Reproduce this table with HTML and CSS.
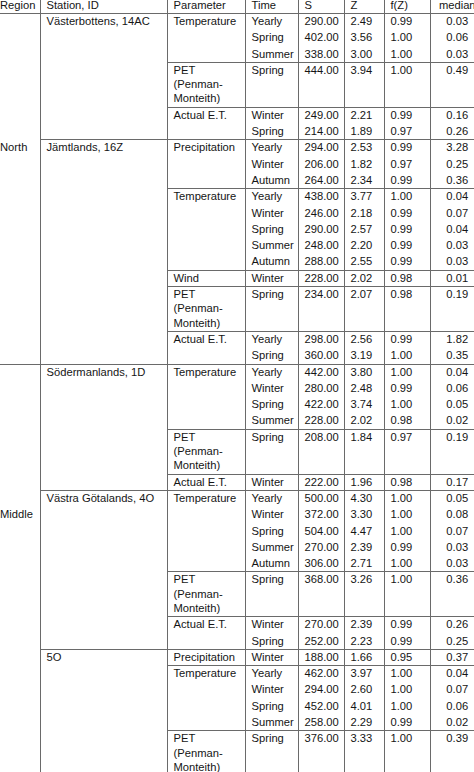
FILE: index.html
```html
<!DOCTYPE html>
<html lang="en">
<head>
<meta charset="utf-8">
<title>Trend test results</title>
<link rel="stylesheet" href="styles.css">
</head>
<body>
<table class="tbl">
  <colgroup>
    <col class="c-region"><col class="c-station"><col class="c-param"><col class="c-time">
    <col class="c-s"><col class="c-z"><col class="c-f"><col class="c-med">
  </colgroup>
  <thead>
    <tr>
      <th class="rg">Region</th><th>Station, ID</th><th>Parameter</th><th>Time</th>
      <th>S</th><th>Z</th><th>f(Z)</th><th class="md">median</th>
    </tr>
  </thead>
  <tbody>
    <!-- Västerbottens -->
    <tr class="g sec">
      <td class="rg"></td>
      <td rowspan="6">Västerbottens, 14AC</td>
      <td rowspan="3">Temperature</td>
      <td>Yearly</td><td>290.00</td><td>2.49</td><td>0.99</td><td class="md">0.03</td>
    </tr>
    <tr><td class="rg"></td><td>Spring</td><td>402.00</td><td>3.56</td><td>1.00</td><td class="md">0.06</td></tr>
    <tr><td class="rg"></td><td>Summer</td><td>338.00</td><td>3.00</td><td>1.00</td><td class="md">0.03</td></tr>
    <tr class="g"><td class="rg"></td><td>PET<br>(Penman-<br>Monteith)</td><td>Spring</td><td>444.00</td><td>3.94</td><td>1.00</td><td class="md">0.49</td></tr>
    <tr class="g"><td class="rg"></td><td rowspan="2">Actual E.T.</td><td>Winter</td><td>249.00</td><td>2.21</td><td>0.99</td><td class="md">0.16</td></tr>
    <tr><td class="rg"></td><td>Spring</td><td>214.00</td><td>1.89</td><td>0.97</td><td class="md">0.26</td></tr>

    <!-- Jämtlands -->
    <tr class="g">
      <td class="rg">North</td>
      <td rowspan="12">Jämtlands, 16Z</td>
      <td rowspan="3">Precipitation</td>
      <td>Yearly</td><td>294.00</td><td>2.53</td><td>0.99</td><td class="md">3.28</td>
    </tr>
    <tr><td class="rg"></td><td>Winter</td><td>206.00</td><td>1.82</td><td>0.97</td><td class="md">0.25</td></tr>
    <tr><td class="rg"></td><td>Autumn</td><td>264.00</td><td>2.34</td><td>0.99</td><td class="md">0.36</td></tr>
    <tr class="g"><td class="rg"></td><td rowspan="5">Temperature</td><td>Yearly</td><td>438.00</td><td>3.77</td><td>1.00</td><td class="md">0.04</td></tr>
    <tr><td class="rg"></td><td>Winter</td><td>246.00</td><td>2.18</td><td>0.99</td><td class="md">0.07</td></tr>
    <tr><td class="rg"></td><td>Spring</td><td>290.00</td><td>2.57</td><td>0.99</td><td class="md">0.04</td></tr>
    <tr><td class="rg"></td><td>Summer</td><td>248.00</td><td>2.20</td><td>0.99</td><td class="md">0.03</td></tr>
    <tr><td class="rg"></td><td>Autumn</td><td>288.00</td><td>2.55</td><td>0.99</td><td class="md">0.03</td></tr>
    <tr class="g"><td class="rg"></td><td>Wind</td><td>Winter</td><td>228.00</td><td>2.02</td><td>0.98</td><td class="md">0.01</td></tr>
    <tr class="g"><td class="rg"></td><td>PET<br>(Penman-<br>Monteith)</td><td>Spring</td><td>234.00</td><td>2.07</td><td>0.98</td><td class="md">0.19</td></tr>
    <tr class="g"><td class="rg"></td><td rowspan="2">Actual E.T.</td><td>Yearly</td><td>298.00</td><td>2.56</td><td>0.99</td><td class="md">1.82</td></tr>
    <tr><td class="rg"></td><td>Spring</td><td>360.00</td><td>3.19</td><td>1.00</td><td class="md">0.35</td></tr>

    <!-- Södermanlands -->
    <tr class="g sec">
      <td class="rg"></td>
      <td rowspan="6">Södermanlands, 1D</td>
      <td rowspan="4">Temperature</td>
      <td>Yearly</td><td>442.00</td><td>3.80</td><td>1.00</td><td class="md">0.04</td>
    </tr>
    <tr><td class="rg"></td><td>Winter</td><td>280.00</td><td>2.48</td><td>0.99</td><td class="md">0.06</td></tr>
    <tr><td class="rg"></td><td>Spring</td><td>422.00</td><td>3.74</td><td>1.00</td><td class="md">0.05</td></tr>
    <tr><td class="rg"></td><td>Summer</td><td>228.00</td><td>2.02</td><td>0.98</td><td class="md">0.02</td></tr>
    <tr class="g"><td class="rg"></td><td>PET<br>(Penman-<br>Monteith)</td><td>Spring</td><td>208.00</td><td>1.84</td><td>0.97</td><td class="md">0.19</td></tr>
    <tr class="g"><td class="rg"></td><td>Actual E.T.</td><td>Winter</td><td>222.00</td><td>1.96</td><td>0.98</td><td class="md">0.17</td></tr>

    <!-- Västra Götalands -->
    <tr class="g">
      <td class="rg"></td>
      <td rowspan="8">Västra Götalands, 4O</td>
      <td rowspan="5">Temperature</td>
      <td>Yearly</td><td>500.00</td><td>4.30</td><td>1.00</td><td class="md">0.05</td>
    </tr>
    <tr><td class="rg">Middle</td><td>Winter</td><td>372.00</td><td>3.30</td><td>1.00</td><td class="md">0.08</td></tr>
    <tr><td class="rg"></td><td>Spring</td><td>504.00</td><td>4.47</td><td>1.00</td><td class="md">0.07</td></tr>
    <tr><td class="rg"></td><td>Summer</td><td>270.00</td><td>2.39</td><td>0.99</td><td class="md">0.03</td></tr>
    <tr><td class="rg"></td><td>Autumn</td><td>306.00</td><td>2.71</td><td>1.00</td><td class="md">0.03</td></tr>
    <tr class="g"><td class="rg"></td><td>PET<br>(Penman-<br>Monteith)</td><td>Spring</td><td>368.00</td><td>3.26</td><td>1.00</td><td class="md">0.36</td></tr>
    <tr class="g"><td class="rg"></td><td rowspan="2">Actual E.T.</td><td>Winter</td><td>270.00</td><td>2.39</td><td>0.99</td><td class="md">0.26</td></tr>
    <tr><td class="rg"></td><td>Spring</td><td>252.00</td><td>2.23</td><td>0.99</td><td class="md">0.25</td></tr>

    <!-- 5O -->
    <tr class="g">
      <td class="rg"></td>
      <td rowspan="6">5O</td>
      <td>Precipitation</td>
      <td>Winter</td><td>188.00</td><td>1.66</td><td>0.95</td><td class="md">0.37</td>
    </tr>
    <tr class="g"><td class="rg"></td><td rowspan="4">Temperature</td><td>Yearly</td><td>462.00</td><td>3.97</td><td>1.00</td><td class="md">0.04</td></tr>
    <tr><td class="rg"></td><td>Winter</td><td>294.00</td><td>2.60</td><td>1.00</td><td class="md">0.07</td></tr>
    <tr><td class="rg"></td><td>Spring</td><td>452.00</td><td>4.01</td><td>1.00</td><td class="md">0.06</td></tr>
    <tr><td class="rg"></td><td>Summer</td><td>258.00</td><td>2.29</td><td>0.99</td><td class="md">0.02</td></tr>
    <tr class="g"><td class="rg"></td><td>PET<br>(Penman-<br>Monteith)</td><td>Spring</td><td>376.00</td><td>3.33</td><td>1.00</td><td class="md">0.39</td></tr>
  </tbody>
</table>
</body>
</html>
```
FILE: styles.css
```css
html, body {
  margin: 0;
  padding: 0;
  background: #ffffff;
  overflow: hidden;
}

body {
  font-family: "Liberation Sans", Arial, Helvetica, sans-serif;
  font-size: 11.2px;
  line-height: 14.3px;
  color: #151515;
}

.tbl {
  border-collapse: separate;
  border-spacing: 0;
  table-layout: fixed;
  width: 488px;
  margin: -3.3px 0 0 -6px;
}

.c-region  { width: 46px; }
.c-station { width: 127px; }
.c-param   { width: 78px; }
.c-time    { width: 53px; }
.c-s       { width: 46px; }
.c-z       { width: 40px; }
.c-f       { width: 46px; }
.c-med     { width: 52px; }

.tbl th,
.tbl td {
  padding: 1px 4px 1px 5.5px;
  text-align: left;
  vertical-align: top;
  font-weight: normal;
  white-space: nowrap;
}

.tbl th:not(.rg),
.tbl td:not(.rg) {
  border-left: 1px solid #6a6a6a;
}

.tbl .rg {
  padding-left: 6px;
}

.tbl .md {
  text-align: center;
}

/* first row of a parameter group: rule above every cell that starts there */
.tbl tr.g > td:not(.rg) {
  border-top: 1px solid #6a6a6a;
  padding-top: 0;
}

/* section rule that also runs through the region column */
.tbl tr.sec > td.rg {
  border-top: 1px solid #6a6a6a;
  padding-top: 0;
}
```
